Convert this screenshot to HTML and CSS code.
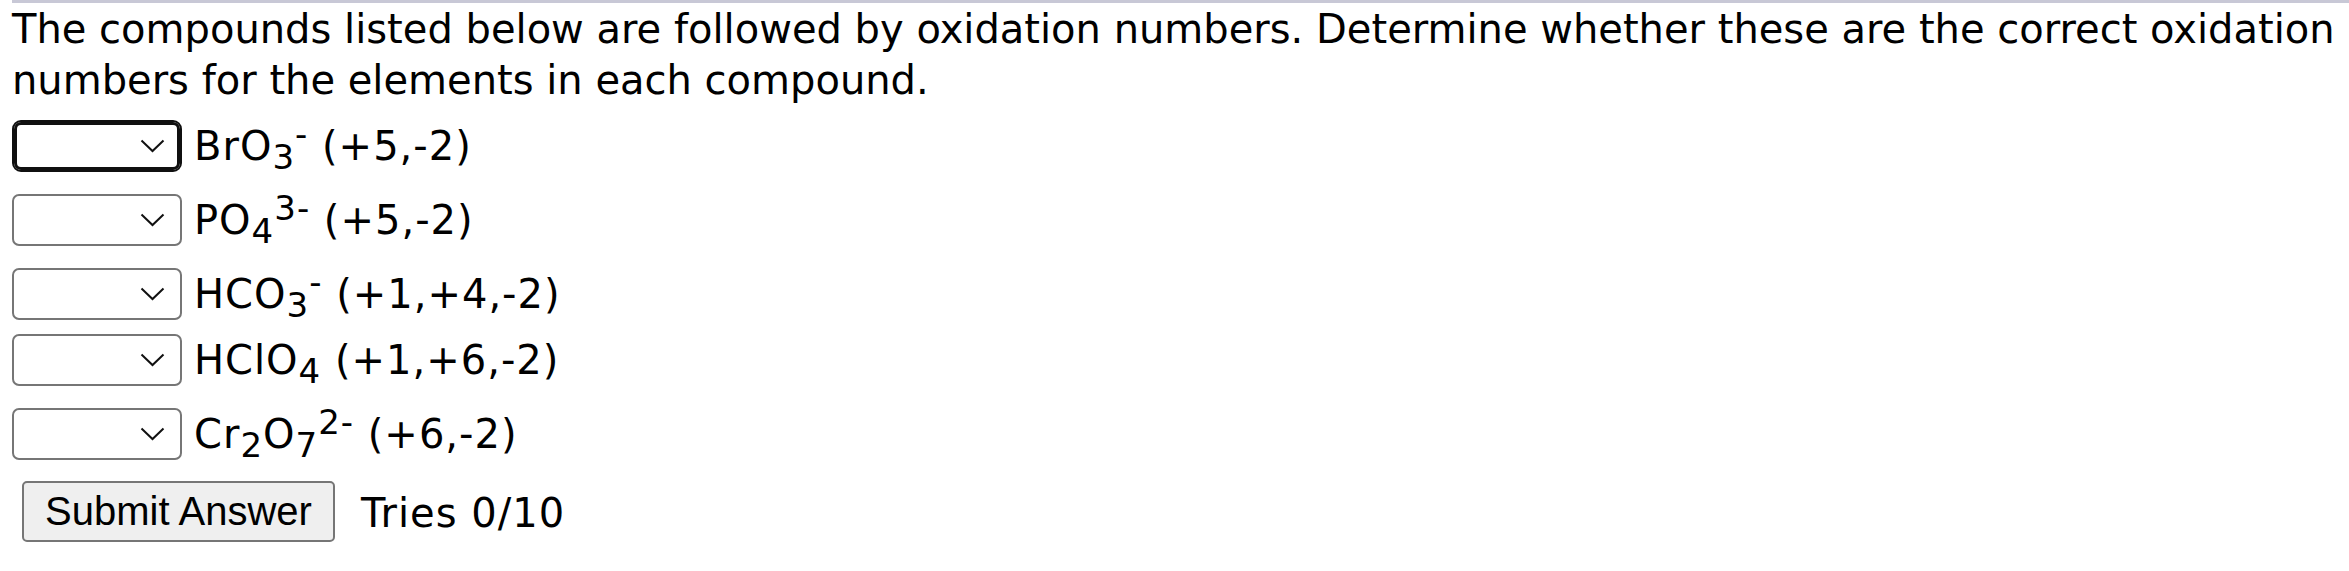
FILE: index.html
```html
<!DOCTYPE html>
<html lang="en">
<head>
<meta charset="utf-8">
<title>Oxidation numbers</title>
<link rel="stylesheet" href="styles.css">
</head>
<body>
<div class="problem">
  <p class="prompt">The compounds listed below are followed by oxidation numbers. Determine whether these are the correct oxidation numbers for the elements in each compound.</p>

  <div class="answers">
    <div class="row first">
      <span class="pick focused">
        <select aria-label="BrO3-"><option value=""></option><option>Correct</option><option>Incorrect</option></select>
        <svg class="chev" viewBox="0 0 25 14" width="25" height="14"><path d="M1.5 1.5 L12.5 12 L23.5 1.5"/></svg>
      </span>
      <span class="formula">BrO<sub>3</sub><sup>-</sup> (+5,-2)</span>
    </div>
    <div class="row ion">
      <span class="pick">
        <select aria-label="PO4 3-"><option value=""></option><option>Correct</option><option>Incorrect</option></select>
        <svg class="chev" viewBox="0 0 25 14" width="25" height="14"><path d="M1.5 1.5 L12.5 12 L23.5 1.5"/></svg>
      </span>
      <span class="formula">PO<sub>4</sub><sup>3-</sup> (+5,-2)</span>
    </div>
    <div class="row ion">
      <span class="pick">
        <select aria-label="HCO3-"><option value=""></option><option>Correct</option><option>Incorrect</option></select>
        <svg class="chev" viewBox="0 0 25 14" width="25" height="14"><path d="M1.5 1.5 L12.5 12 L23.5 1.5"/></svg>
      </span>
      <span class="formula">HCO<sub>3</sub><sup>-</sup> (+1,+4,-2)</span>
    </div>
    <div class="row">
      <span class="pick">
        <select aria-label="HClO4"><option value=""></option><option>Correct</option><option>Incorrect</option></select>
        <svg class="chev" viewBox="0 0 25 14" width="25" height="14"><path d="M1.5 1.5 L12.5 12 L23.5 1.5"/></svg>
      </span>
      <span class="formula">HClO<sub>4</sub> (+1,+6,-2)</span>
    </div>
    <div class="row ion">
      <span class="pick">
        <select aria-label="Cr2O7 2-"><option value=""></option><option>Correct</option><option>Incorrect</option></select>
        <svg class="chev" viewBox="0 0 25 14" width="25" height="14"><path d="M1.5 1.5 L12.5 12 L23.5 1.5"/></svg>
      </span>
      <span class="formula">Cr<sub>2</sub>O<sub>7</sub><sup>2-</sup> (+6,-2)</span>
    </div>
  </div>

  <div class="actions">
    <button type="button" class="submit">Submit Answer</button>
    <span class="tries">Tries 0/10</span>
  </div>
</div>
</body>
</html>
```

FILE: styles.css
```css
html, body {
  margin: 0;
  padding: 0;
  background: #ffffff;
}

body {
  font-family: "DejaVu Sans", Verdana, sans-serif;
  font-size: 40px;
  color: #000000;
}

/* question block with its thin rule on top */
.problem {
  margin-left: 12px;
  border-top: 3px solid #c8c8d6;
}

.prompt {
  margin: 0;
  padding-top: 1px;
  line-height: 51px;
}

/* answer rows: a dropdown followed by the formula */
.answers {
  display: flex;
  flex-direction: column;
}

.row {
  display: flex;
  align-items: center;
  margin-top: 14px;
}

.row.first {
  margin-top: 14px;
}

.row.ion {
  margin-top: 22px;
}

.pick {
  position: relative;
  display: block;
  width: 170px;
  height: 52px;
  flex: none;
}

.pick select {
  appearance: none;
  -webkit-appearance: none;
  display: block;
  width: 100%;
  height: 100%;
  margin: 0;
  padding: 0 10px;
  box-sizing: border-box;
  border: 2px solid #767676;
  border-radius: 7px;
  background: #ffffff;
  font: inherit;
  color: #000;
}

.pick.focused select {
  border-color: #101010;
  border-radius: 9px;
  box-shadow: inset 0 0 0 3px #101010;
  outline: none;
}

.chev {
  position: absolute;
  right: 17px;
  top: 50%;
  margin-top: -7px;
  pointer-events: none;
}

.chev path {
  fill: none;
  stroke: #111111;
  stroke-width: 2;
}

.formula {
  margin-left: 12px;
  line-height: 46px;
  letter-spacing: 1px;
  white-space: nowrap;
}

.formula sub,
.formula sup {
  font-size: 0.85em;
  line-height: 0;
}

/* submit button and attempt counter */
.actions {
  display: flex;
  align-items: center;
  margin-top: 21px;
  margin-left: 10px;
}

.submit {
  width: 313px;
  height: 61px;
  margin: 0;
  padding: 0;
  box-sizing: border-box;
  border: 2px solid #767676;
  border-radius: 5px;
  background: #efefef;
  font-family: "Liberation Sans", Arial, sans-serif;
  font-size: 40px;
  color: #000;
}

.tries {
  margin-left: 26px;
  padding-top: 3px;
  letter-spacing: 1px;
}
```
